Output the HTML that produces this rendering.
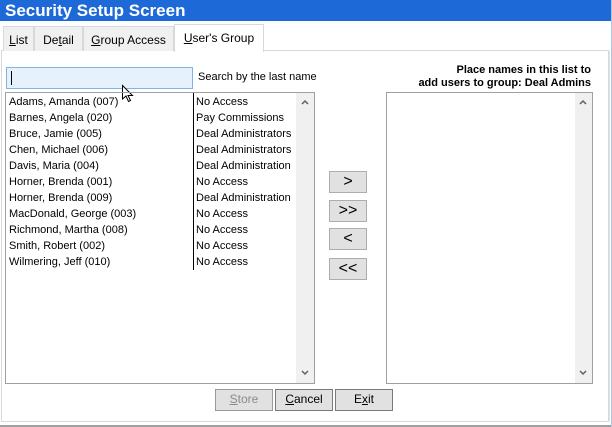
<!DOCTYPE html>
<html><head><style>
*{margin:0;padding:0;box-sizing:border-box}
body{width:612px;height:427px;background:#fff;font-family:"Liberation Sans",Arial,sans-serif;font-size:11px;color:#000;position:relative;overflow:hidden}
.a{position:absolute}
.title{left:0;top:0;width:611px;height:21px;background:#1e69d8;color:#fff;font-weight:bold;font-size:17px;padding-left:5px;line-height:21px}
.tab{top:26px;height:25px;background:#f0f0f0;border:1px solid #d9d9d9;border-bottom:none;font-size:12px;line-height:26px;text-align:center}
.btn{background:#e1e1e1;border:1px solid #adadad;text-align:center;font-size:12px;line-height:19px}
.row{left:9px;font-size:11px;line-height:16px}
.sb{background:#f0f0f0}
</style></head><body>
<div class="a title">Security Setup Screen</div>
<div class="a" style="left:611px;top:0;width:1px;height:427px;background:#a8c8ea"></div>
<div class="a" style="left:1px;top:50px;width:608px;height:372px;border:1px solid #d9d9d9"></div>
<div class="a" style="left:0;top:425px;width:611px;height:2px;background:#a0a0a0"></div>
<div class="a tab" style="left:3px;width:31px"><u>L</u>ist</div>
<div class="a tab" style="left:34px;width:49px">De<u>t</u>ail</div>
<div class="a tab" style="left:83px;width:91px"><u>G</u>roup Access</div>
<div class="a tab" style="left:174px;top:24px;width:90px;height:28px;background:#fff;line-height:26px"><u>U</u>ser's Group</div>
<div class="a" style="left:6px;top:67px;width:187px;height:22px;background:#e5f1fb;border:1px solid #7eb4ea"></div>
<div class="a" style="left:11px;top:71px;width:1px;height:14px;background:#000"></div>
<div class="a" style="left:198px;top:71px">Search by the last name</div>
<svg class="a" style="left:121px;top:84px" width="14" height="20" viewBox="0 0 14 20"><path d="M1.5 1.5 L1.5 15 L5 12 L7.5 17.5 L9.5 16.5 L7 11.5 L11.5 11.5 Z" fill="#fff" stroke="#000" stroke-width="1"/></svg>
<div class="a" style="left:5px;top:92px;width:310px;height:292px;border:1px solid #a0a0a0"></div>
<div class="a sb" style="left:296px;top:93px;width:18px;height:290px"></div>
<svg class="a" style="left:300px;top:98px" width="10" height="8"><path d="M2 6 L5 3 L8 6" fill="none" stroke="#606060" stroke-width="1.5"/></svg>
<svg class="a" style="left:300px;top:369px" width="10" height="8"><path d="M2 2 L5 5 L8 2" fill="none" stroke="#606060" stroke-width="1.5"/></svg>
<div class="a" style="left:193px;top:93px;width:1px;height:177px;background:#000"></div>
<div class="a row" style="top:94px">Adams, Amanda (007)<br>Barnes, Angela (020)<br>Bruce, Jamie (005)<br>Chen, Michael (006)<br>Davis, Maria (004)<br>Horner, Brenda (001)<br>Horner, Brenda (009)<br>MacDonald, George (003)<br>Richmond, Martha (008)<br>Smith, Robert (002)<br>Wilmering, Jeff (010)</div>
<div class="a row" style="left:196px;top:94px">No Access<br>Pay Commissions<br>Deal Administrators<br>Deal Administrators<br>Deal Administration<br>No Access<br>Deal Administration<br>No Access<br>No Access<br>No Access<br>No Access</div>
<div class="a" style="left:380px;top:64px;width:211px;text-align:right;font-weight:bold;line-height:13px">Place names in this list to<br>add users to group: Deal Admins</div>
<div class="a" style="left:386px;top:92px;width:207px;height:292px;border:1px solid #a0a0a0"></div>
<div class="a sb" style="left:575px;top:93px;width:17px;height:290px"></div>
<svg class="a" style="left:578px;top:98px" width="10" height="8"><path d="M2 6 L5 3 L8 6" fill="none" stroke="#606060" stroke-width="1.5"/></svg>
<svg class="a" style="left:578px;top:369px" width="10" height="8"><path d="M2 2 L5 5 L8 2" fill="none" stroke="#606060" stroke-width="1.5"/></svg>
<div class="a" style="left:609px;top:51px;width:1px;height:370px;background:#e0e0e0"></div>
<div class="a btn" style="left:329px;top:171px;width:38px;height:22px;font-size:16px">&gt;</div>
<div class="a btn" style="left:329px;top:200px;width:38px;height:22px;font-size:16px">&gt;&gt;</div>
<div class="a btn" style="left:329px;top:228px;width:38px;height:22px;font-size:16px">&lt;</div>
<div class="a btn" style="left:329px;top:258px;width:38px;height:22px;font-size:16px">&lt;&lt;</div>
<div class="a btn" style="left:215px;top:389px;width:58px;height:22px;color:#8a8a8a;border-color:#9a9a9a"><u>S</u>tore</div>
<div class="a btn" style="left:275px;top:389px;width:58px;height:22px;border-color:#7a7a7a"><u>C</u>ancel</div>
<div class="a btn" style="left:335px;top:389px;width:58px;height:22px;border-color:#7a7a7a">E<u>x</u>it</div>
</body></html>
